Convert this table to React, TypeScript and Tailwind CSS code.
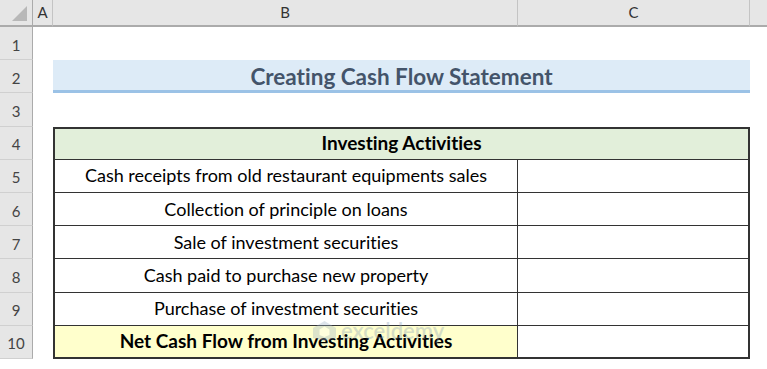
import React from 'react';

const rows = [
  'Cash receipts from old restaurant equipments sales',
  'Collection of principle on loans',
  'Sale of investment securities',
  'Cash paid to purchase new property',
  'Purchase of investment securities',
];

function RowHead({ n }: { n: number }) {
  return (
    <div className="flex items-end justify-center pb-[3px] bg-[#e6e6e6] border-r border-r-[#ababab] border-b border-b-[#d0d0d0] text-[15px] text-[#444]">
      {n}
    </div>
  );
}

function Blank() {
  return <div className="bg-white" />;
}

export default function App() {
  return (
    <div
      className="relative w-[767px] h-[369px] overflow-hidden bg-white [font-variant-ligatures:none]"
      style={{ fontFamily: 'Lato, "Open Sans", sans-serif' }}
    >
      <div className="grid grid-cols-[33px_20px_465px_232px_1fr] grid-rows-[27px_repeat(10,33.2px)]">
        {/* column header */}
        <div className="relative bg-[#e6e6e6] border-r border-r-[#ababab] border-b-2 border-b-[#ababab]">
          <div className="absolute right-[5px] bottom-[4px] w-0 h-0 border-l-[15px] border-l-transparent border-b-[15px] border-b-[#b8b8b8]" />
        </div>
        <div className="flex items-center justify-center bg-[#e6e6e6] border-r border-r-[#c4c4c4] border-b-2 border-b-[#ababab] text-[15px] text-[#333]">A</div>
        <div className="flex items-center justify-center bg-[#e6e6e6] border-r border-r-[#c4c4c4] border-b-2 border-b-[#ababab] text-[15px] text-[#333]">B</div>
        <div className="flex items-center justify-center bg-[#e6e6e6] border-r border-r-[#c4c4c4] border-b-2 border-b-[#ababab] text-[15px] text-[#333]">C</div>
        <div className="bg-[#e6e6e6] border-b-2 border-b-[#ababab]" />

        {/* row 1 */}
        <RowHead n={1} />
        <Blank />
        <Blank />
        <Blank />
        <Blank />

        {/* row 2 title */}
        <RowHead n={2} />
        <Blank />
        <div className="col-span-2 flex items-center justify-center pt-[3px] bg-[#ddebf7] border-b-[3px] border-b-[#9bc2e6] text-[22.5px] font-bold text-[#44546a]">
          Creating Cash Flow Statement
        </div>
        <Blank />

        {/* row 3 */}
        <RowHead n={3} />
        <Blank />
        <Blank />
        <Blank />
        <Blank />

        {/* row 4 header */}
        <RowHead n={4} />
        <Blank />
        <div className="col-span-2 flex items-center justify-center bg-[#e2efda] border-2 border-b border-[#333] text-[19px] font-bold text-black">
          Investing Activities
        </div>
        <Blank />

        {rows.map((label, i) => (
          <React.Fragment key={label}>
            <RowHead n={5 + i} />
            <Blank />
            <div className="flex items-center justify-center border-l-2 border-r border-b border-[#333] text-[18px] text-black">
              {label}
            </div>
            <div className="border-r-2 border-b border-[#333]" />
            <Blank />
          </React.Fragment>
        ))}

        {/* row 10 total */}
        <RowHead n={10} />
        <Blank />
        <div className="flex items-center justify-center bg-[#ffffcc] border-l-2 border-r border-b-2 border-[#333] text-[19px] font-bold text-black">
          Net Cash Flow from Investing Activities
        </div>
        <div className="border-r-2 border-b-2 border-[#333]" />
        <Blank />
      </div>

      {/* watermark */}
      <div className="absolute left-[312px] top-[320px] flex items-center gap-[4px] opacity-35 pointer-events-none">
        <svg width="25" height="22" viewBox="0 0 25 22">
          <path d="M12.5 1 L24 8 L24 18 L12.5 21 L1 18 L1 8 Z" fill="#9fb3c8" />
          <path d="M12.5 6.5 L17.5 9.5 L17.5 15 L12.5 17 L7.5 15 L7.5 9.5 Z" fill="#ffffff" />
        </svg>
        <span className="text-[22px] font-semibold text-[#8aa0b8] leading-none">exceldemy</span>
      </div>
    </div>
  );
}
